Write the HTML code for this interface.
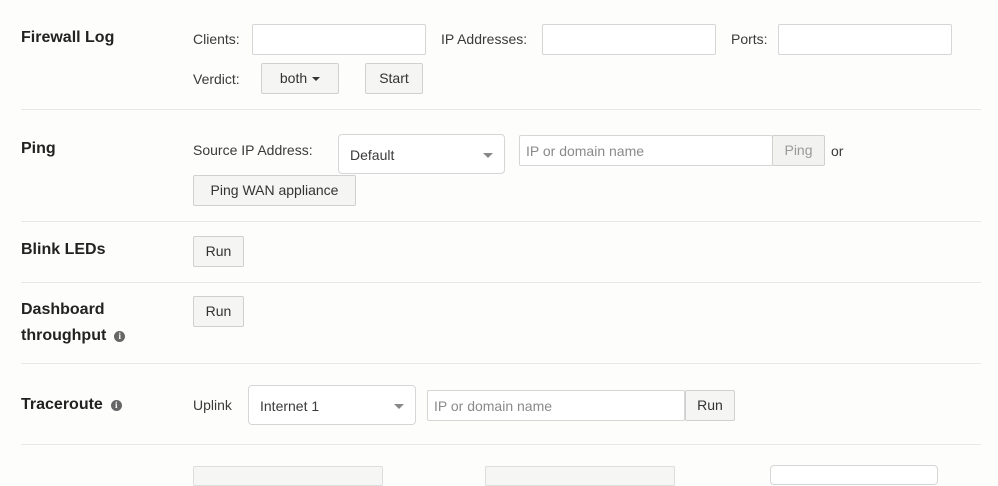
<!DOCTYPE html>
<html><head><meta charset="utf-8"><style>
body{margin:0;width:998px;height:471px;overflow:hidden;background:#fdfdfc;font-family:"Liberation Sans",sans-serif;color:#3a3a3a;font-size:14px;position:relative}
.a{position:absolute;white-space:nowrap}
.h{font-weight:bold;font-size:16px;color:#222}
.t{line-height:16px}
.in{position:absolute;box-sizing:border-box;border:1px solid #d6d6d6;background:#fff;border-radius:2px}
.btn{position:absolute;box-sizing:border-box;border:1px solid #d0d0d0;background:#f5f5f3;border-radius:2px;text-align:center;font-size:14px;color:#333}
.sep{position:absolute;left:21px;width:960px;height:1px;background:#e8e8e8}
.car{display:inline-block;width:0;height:0;border-left:4px solid transparent;border-right:4px solid transparent;border-top:4px solid #333;vertical-align:middle;margin-left:5px}
.gc{position:absolute;width:0;height:0;border-left:5px solid transparent;border-right:5px solid transparent;border-top:5px solid #888}
.i{display:inline-block;width:11px;height:11px;border-radius:50%;background:#666;color:#fff;font-size:9px;line-height:11px;text-align:center;font-weight:bold;vertical-align:1px;margin-left:8px;font-family:"Liberation Serif",serif}
.ph{color:#8a8a8a}
</style></head><body>
<div class="a h" style="left:21px;top:29px">Firewall Log</div>
<div class="a t" style="left:193px;top:31px">Clients:</div>
<div class="in" style="left:252px;top:24px;width:174px;height:31px"></div>
<div class="a t" style="left:441px;top:31px">IP Addresses:</div>
<div class="in" style="left:542px;top:24px;width:174px;height:31px"></div>
<div class="a t" style="left:731px;top:31px">Ports:</div>
<div class="in" style="left:778px;top:24px;width:174px;height:31px"></div>
<div class="a t" style="left:193px;top:71px">Verdict:</div>
<div class="btn" style="left:261px;top:63px;width:78px;height:31px;line-height:29px">both<span class="car"></span></div>
<div class="btn" style="left:365px;top:63px;width:58px;height:31px;line-height:29px">Start</div>
<div class="sep" style="top:109px"></div>

<div class="a h" style="left:21px;top:140px">Ping</div>
<div class="a t" style="left:193px;top:142px">Source IP Address:</div>
<div class="in" style="left:338px;top:134px;width:167px;height:40px;border-radius:4px"><span class="a" style="left:11px;top:12px">Default</span><span class="gc" style="left:144px;top:18px"></span></div>
<div class="in" style="left:519px;top:135px;width:254px;height:31px"><span class="a ph" style="left:6px;top:7px">IP or domain name</span></div>
<div class="btn" style="left:772px;top:135px;width:53px;height:31px;line-height:29px;color:#999;background:#f2f2f0">Ping</div>
<div class="a t" style="left:831px;top:143px">or</div>
<div class="btn" style="left:193px;top:175px;width:163px;height:31px;line-height:29px">Ping WAN appliance</div>
<div class="sep" style="top:221px"></div>

<div class="a h" style="left:21px;top:241px">Blink LEDs</div>
<div class="btn" style="left:193px;top:236px;width:51px;height:31px;line-height:29px">Run</div>
<div class="sep" style="top:282px"></div>

<div class="a h" style="left:21px;top:301px">Dashboard</div>
<div class="a h" style="left:21px;top:327px">throughput<span class="i">i</span></div>
<div class="btn" style="left:193px;top:296px;width:51px;height:31px;line-height:29px">Run</div>
<div class="sep" style="top:363px"></div>

<div class="a h" style="left:21px;top:396px">Traceroute<span class="i">i</span></div>
<div class="a t" style="left:193px;top:397px">Uplink</div>
<div class="in" style="left:248px;top:385px;width:168px;height:40px;border-radius:4px"><span class="a" style="left:11px;top:12px">Internet 1</span><span class="gc" style="left:145px;top:18px"></span></div>
<div class="in" style="left:427px;top:390px;width:258px;height:31px"><span class="a ph" style="left:6px;top:7px">IP or domain name</span></div>
<div class="btn" style="left:685px;top:390px;width:50px;height:31px;line-height:29px">Run</div>
<div class="sep" style="top:444px"></div>

<div class="in" style="left:193px;top:466px;width:190px;height:20px;border-color:#ddd;background:#f6f6f4"></div>
<div class="in" style="left:485px;top:466px;width:190px;height:20px;border-color:#ddd;background:#f6f6f4"></div>
<div class="in" style="left:770px;top:465px;width:168px;height:20px;border-radius:4px"></div>
</body></html>
